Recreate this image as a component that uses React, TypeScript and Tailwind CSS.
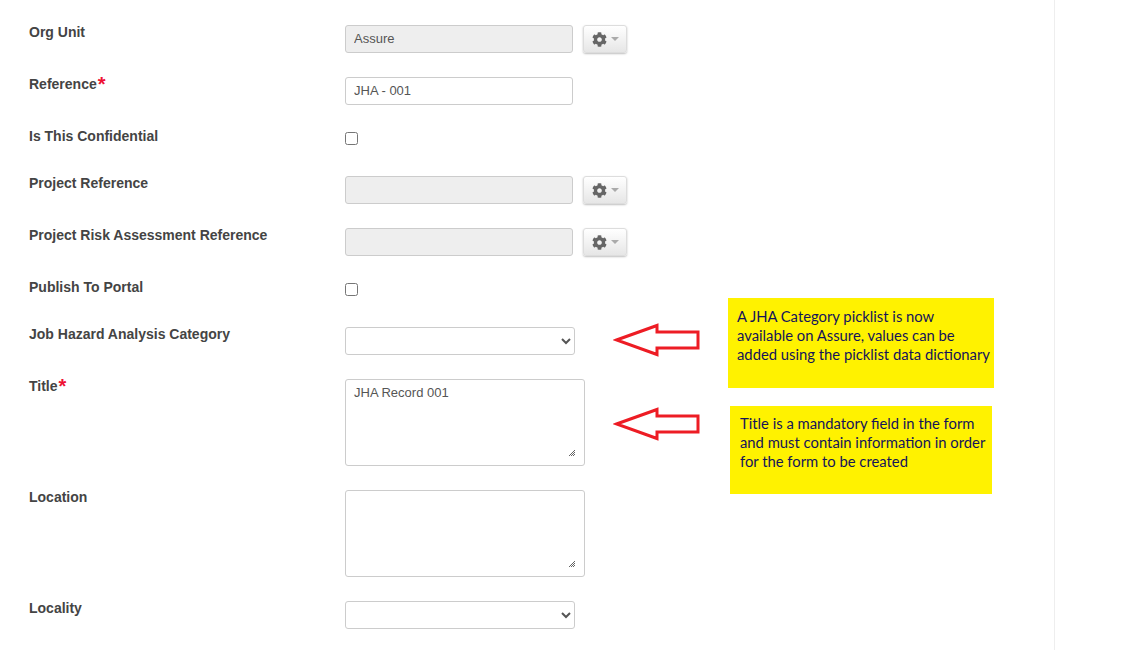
import { FaCog } from "react-icons/fa";

const INPUT = "h-7 w-[228px] rounded-[3px] border border-[#ccc] px-2 pb-0.5 text-[13px] leading-[14px] text-[#555] outline-none";
const AREA = "block h-[87px] w-[240px] resize-none rounded-[3px] border border-[#ccc] px-2 py-1.5 text-[13px] leading-[14px] text-[#555] outline-none";
const SELECT = "h-7 w-[230px] rounded-[3px] border border-[#ccc] bg-white text-[13px] text-[#555] outline-none";

function Label({ text, required }: { text: string; required?: boolean }) {
  return (
    <div className="flex w-[316px] shrink-0 items-start text-[14px] font-bold leading-[14px] text-[#444]">
      <span>{text}</span>
      {required && <span className="ml-px text-[20px] font-bold leading-[14px] text-[#ee1133]">*</span>}
    </div>
  );
}

function GearButton() {
  return (
    <button className="ml-[10px] flex h-7 w-11 items-center justify-center gap-1 rounded-[3px] border border-[#ddd] bg-gradient-to-b from-white to-[#e6e6e6] pl-px text-[#666] shadow-[0_1px_2px_rgba(0,0,0,0.25)]">
      <FaCog size={15} />
      <span className="h-0 w-0 border-x-[4px] border-t-[4px] border-x-transparent border-t-[#aaa]" />
    </button>
  );
}

function Arrow({ className }: { className: string }) {
  return (
    <svg className={className} width="88" height="36" viewBox="0 0 88 36">
      <path
        d="M3.5 18 L44 3.5 L44 10 L85 10 L85 26 L44 26 L44 32.5 Z"
        fill="white"
        stroke="#ed1c24"
        strokeWidth="3"
      />
    </svg>
  );
}

// the grip in the reference sits a few pixels in from the corner
function Notes({ value }: { value?: string }) {
  return (
    <div className="relative">
      <textarea readOnly value={value ?? ""} className={AREA} />
      <svg className="absolute bottom-[9px] right-[9px]" width="8" height="8" viewBox="0 0 8 8">
        <path d="M1 7 L7 1 M3 7 L7 3 M5 7 L7 5" stroke="#666" strokeWidth="1" />
      </svg>
    </div>
  );
}

export default function App() {
  return (
    <div className="relative h-[650px] w-[1135px] overflow-hidden bg-white font-['Liberation_Sans',Arial,sans-serif]">
      <div className="h-full w-[1055px] border-r border-[#eee] pl-[29px] pt-[25px]">
        <div className="mb-6 flex">
          <Label text="Org Unit" />
          <input readOnly value="Assure" className={`${INPUT} bg-[#eee]`} />
          <GearButton />
        </div>
        <div className="mb-6 flex">
          <Label text="Reference" required />
          <input readOnly value="JHA - 001" className={INPUT} />
        </div>
        <div className="mb-6 flex h-[23px]">
          <Label text="Is This Confidential" />
          <input type="checkbox" className="mt-[3px] h-[13px] w-[13px]" />
        </div>
        <div className="mb-6 flex">
          <Label text="Project Reference" />
          <input readOnly className={`${INPUT} bg-[#eee]`} />
          <GearButton />
        </div>
        <div className="mb-6 flex">
          <Label text="Project Risk Assessment Reference" />
          <input readOnly className={`${INPUT} bg-[#eee]`} />
          <GearButton />
        </div>
        <div className="mb-6 flex h-[23px]">
          <Label text="Publish To Portal" />
          <input type="checkbox" className="mt-[3px] h-[13px] w-[13px]" />
        </div>
        <div className="mb-6 flex">
          <Label text="Job Hazard Analysis Category" />
          <select className={SELECT} />
        </div>
        <div className="mb-6 flex">
          <Label text="Title" required />
          <Notes value="JHA Record 001" />
        </div>
        <div className="mb-6 flex">
          <Label text="Location" />
          <Notes />
        </div>
        <div className="flex">
          <Label text="Locality" />
          <select className={SELECT} />
        </div>
      </div>

      {/* Annotations pasted over the form */}
      <Arrow className="absolute left-[613px] top-[322px]" />
      <Arrow className="absolute left-[613px] top-[406px]" />
      <div className="absolute left-[728px] top-[298px] h-[90px] w-[266px] bg-[#fff200] pl-[9px] pt-[9px] font-['Lato',sans-serif] text-[14.8px] leading-[19px] text-[#14145a]">
        A JHA Category picklist is now
        <br />
        available on Assure, values can be
        <br />
        added using the picklist data dictionary
      </div>
      <div className="absolute left-[730px] top-[406px] h-[88px] w-[262px] bg-[#fff200] pl-[10px] pt-[8px] font-['Lato',sans-serif] text-[14.8px] leading-[19px] text-[#14145a]">
        Title is a mandatory field in the form
        <br />
        and must contain information in order
        <br />
        for the form to be created
      </div>
    </div>
  );
}
